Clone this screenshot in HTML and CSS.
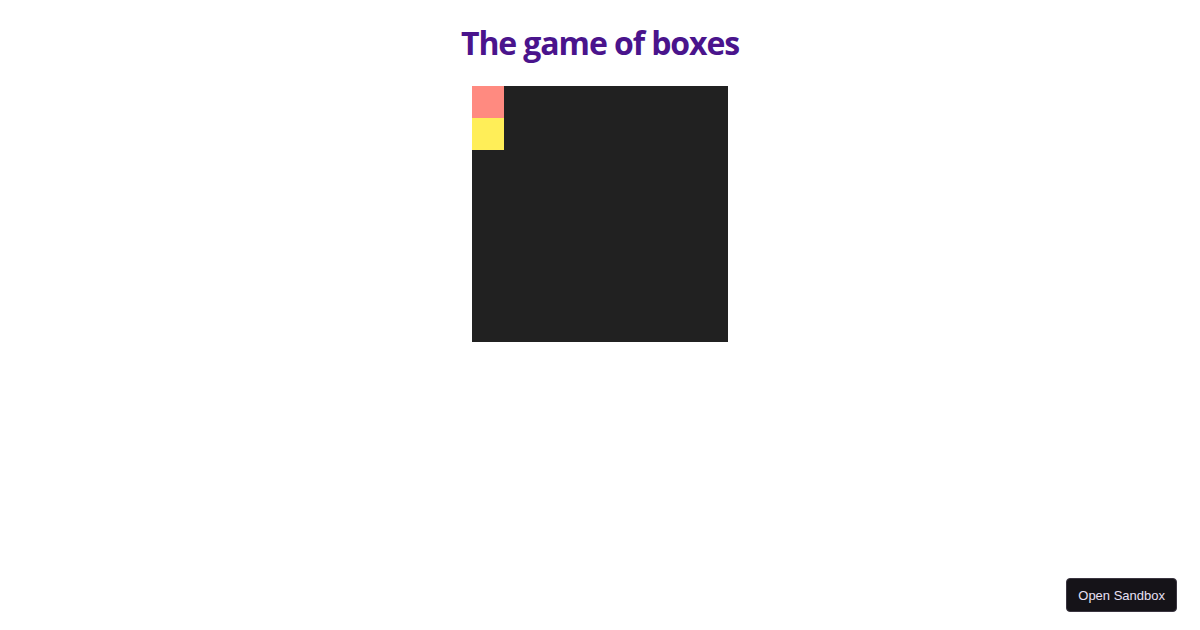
FILE: index.html
```html
<!DOCTYPE html>
<html>
<head>
<meta charset="utf-8">
<link rel="stylesheet" href="styles.css">
</head>
<body>
<main class="page">
  <h1 class="title">The game of boxes</h1>
  <div class="board">
    <div class="cell cell-red"></div>
    <div class="cell cell-yellow"></div>
  </div>
</main>
<a class="sandbox-btn">Open Sandbox</a>
</body>
</html>
```
FILE: styles.css
```css
html, body {
  margin: 0;
  padding: 0;
  background: #ffffff;
}
.page {
  display: flex;
  flex-direction: column;
  align-items: center;
  padding-top: 24px;
  gap: 24px;
  font-family: "Open Sans", sans-serif;
}
.title {
  margin: 0;
  font-size: 32px;
  line-height: 38px;
  font-weight: 700;
  letter-spacing: -1.1px;
  color: #4a148c;
}
.board {
  width: 256px;
  height: 256px;
  background: #212121;
  display: grid;
  grid-template-columns: repeat(8, 32px);
  grid-template-rows: repeat(8, 32px);
  grid-auto-flow: column;
}
.cell-red { background: #ff8a80; }
.cell-yellow { background: #ffee58; }
.sandbox-btn {
  position: fixed;
  right: 23px;
  bottom: 18px;
  box-sizing: border-box;
  height: 34px;
  padding: 0 11px;
  display: flex;
  align-items: center;
  background: #151318;
  border: 1px solid #3a3540;
  border-radius: 4px;
  color: #e8e0f5;
  font-family: "Liberation Sans", Arial, sans-serif;
  font-size: 13px;
}
```
